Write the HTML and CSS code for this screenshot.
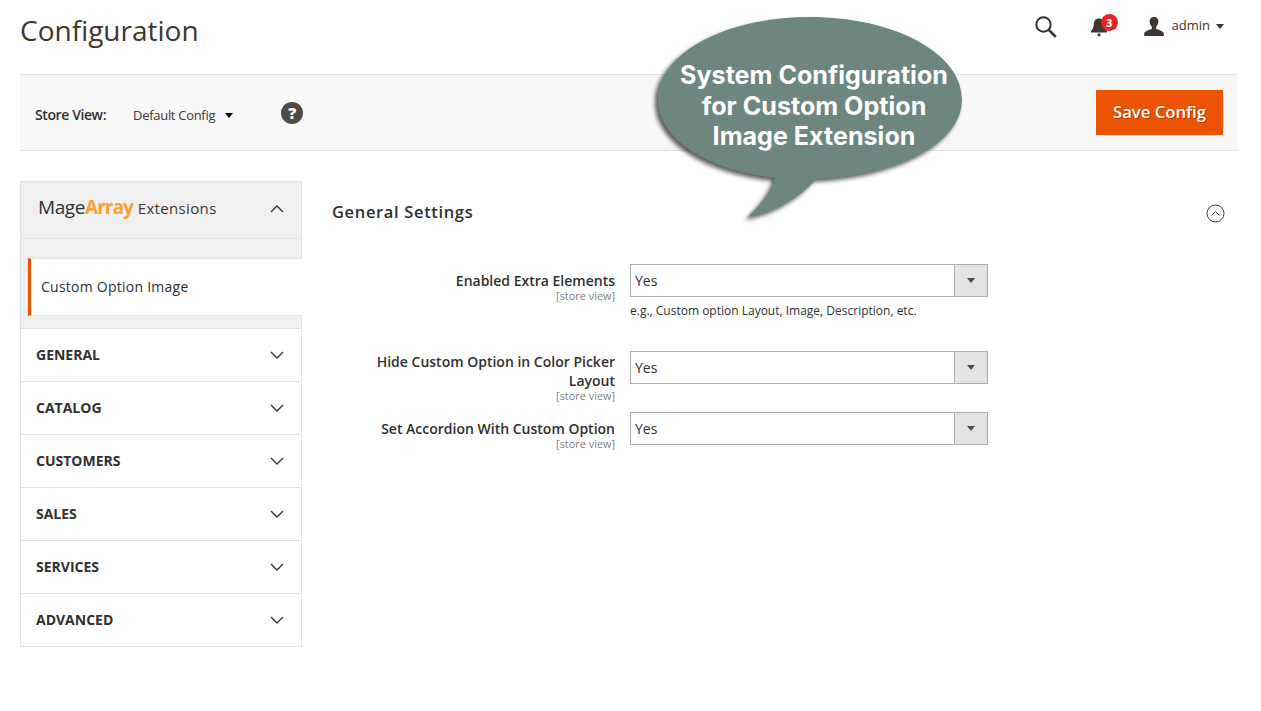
FILE: index.html
```html
<!DOCTYPE html>
<html lang="en">
<head>
<meta charset="utf-8">
<title>Configuration</title>
<link rel="stylesheet" href="styles.css">
</head>
<body>
<div class="page">
  <header class="header">
    <h1 class="title">Configuration</h1>
    <div class="actions">
      <svg class="icon-search" width="22" height="22" viewBox="0 0 22 22"><circle cx="8.500" cy="8.500" r="7.200" fill="none" stroke="#303030" stroke-width="2"/><path d="M13.800 13.800l7 7" stroke="#303030" stroke-width="2.600" fill="none"/></svg>
      <div class="bell">
        <svg width="18" height="20" viewBox="0 0 18 20"><path d="M9 1.500c-3.400 0-5.200 2.600-5.200 5.600 0 3.600-1.200 5.400-2.800 6.900v1.500h16v-1.500c-1.600-1.500-2.800-3.300-2.800-6.900 0-3-1.800-5.600-5.200-5.600z" fill="#41362f"/><circle cx="9" cy="17.800" r="1.600" fill="#41362f"/></svg>
        <span class="badge">3</span>
      </div>
      <div class="user">
        <svg width="20" height="19" viewBox="0 0 20 19"><path d="M10 0c-3 0-4.600 2.200-4.300 5.100.2 2 1 3.700 2.200 4.800v1.800c-2 1-7.200 2.300-7.700 4.500v2.800h19.600v-2.800c-.5-2.200-5.700-3.500-7.700-4.500V9.900c1.200-1.100 2-2.800 2.200-4.800C14.600 2.200 13 0 10 0z" fill="#41362f"/></svg>
        <span class="user-name">admin</span>
        <span class="caret caret-user"></span>
      </div>
    </div>
  </header>

  <div class="toolbar">
    <div class="scope">
      <span class="scope-label">Store View:</span>
      <span class="scope-value">Default Config</span>
      <span class="caret caret-scope"></span>
      <span class="help">?</span>
    </div>
    <button class="save" type="button">Save Config</button>
  </div>

  <div class="columns">
    <aside class="sidebar">
      <div class="tab-head">
        <span class="brand"><span class="brand-mage">Mage</span><span class="brand-array">Array</span><span class="brand-ext">Extensions</span></span>
        <svg class="chev" width="14" height="8" viewBox="0 0 14 8"><path d="M1 7l6-6 6 6" fill="none" stroke="#303030" stroke-width="1.300"/></svg>
      </div>
      <div class="tab-body">
        <div class="tab-item">Custom Option Image</div>
      </div>
      <div class="nav-list">
        <div class="nav-row"><span class="nav-text">GENERAL</span><svg class="chev" width="14" height="8" viewBox="0 0 14 8"><path d="M1 1l6 6 6-6" fill="none" stroke="#303030" stroke-width="1.300"/></svg></div>
        <div class="nav-row"><span class="nav-text">CATALOG</span><svg class="chev" width="14" height="8" viewBox="0 0 14 8"><path d="M1 1l6 6 6-6" fill="none" stroke="#303030" stroke-width="1.300"/></svg></div>
        <div class="nav-row"><span class="nav-text">CUSTOMERS</span><svg class="chev" width="14" height="8" viewBox="0 0 14 8"><path d="M1 1l6 6 6-6" fill="none" stroke="#303030" stroke-width="1.300"/></svg></div>
        <div class="nav-row"><span class="nav-text">SALES</span><svg class="chev" width="14" height="8" viewBox="0 0 14 8"><path d="M1 1l6 6 6-6" fill="none" stroke="#303030" stroke-width="1.300"/></svg></div>
        <div class="nav-row"><span class="nav-text">SERVICES</span><svg class="chev" width="14" height="8" viewBox="0 0 14 8"><path d="M1 1l6 6 6-6" fill="none" stroke="#303030" stroke-width="1.300"/></svg></div>
        <div class="nav-row"><span class="nav-text">ADVANCED</span><svg class="chev" width="14" height="8" viewBox="0 0 14 8"><path d="M1 1l6 6 6-6" fill="none" stroke="#303030" stroke-width="1.300"/></svg></div>
      </div>
    </aside>

    <main class="main">
      <div class="section-head">
        <h2 class="section-title">General Settings</h2>
        <svg class="collapse" width="19" height="19" viewBox="0 0 19 19"><circle cx="9.500" cy="9.500" r="8.500" fill="none" stroke="#41362f" stroke-width="1"/><path d="M5.500 11.500l4-4 4 4" fill="none" stroke="#41362f" stroke-width="1"/></svg>
      </div>
      <div class="form">
        <div class="field field-first">
          <div class="field-label">Enabled Extra Elements<small class="scope-note">[store view]</small></div>
          <div class="field-control">
            <div class="select"><span class="select-value">Yes</span><span class="select-arrow"><span class="caret caret-select"></span></span></div>
            <p class="hint">e.g., Custom option Layout, Image, Description, etc.</p>
          </div>
        </div>
        <div class="field field-second">
          <div class="field-label field-label-wrap">Hide Custom Option in Color Picker Layout<small class="scope-note">[store view]</small></div>
          <div class="field-control">
            <div class="select"><span class="select-value">Yes</span><span class="select-arrow"><span class="caret caret-select"></span></span></div>
          </div>
        </div>
        <div class="field">
          <div class="field-label">Set Accordion With Custom Option<small class="scope-note">[store view]</small></div>
          <div class="field-control">
            <div class="select"><span class="select-value">Yes</span><span class="select-arrow"><span class="caret caret-select"></span></span></div>
          </div>
        </div>
      </div>
    </main>
  </div>

  <div class="bubble">
    <svg class="bubble-shape" width="340" height="240" viewBox="0 0 340 240"><path d="M170 12C254 12 322 48 322 94.500C322 139 258 170 176 174C158 195 132 208 108 212C120 200 132 186 135 173C65 165 18 133 18 94.500C18 48 86 12 170 12Z" fill="#6d8780"/></svg>
    <p class="bubble-text">System Configuration<br>for Custom Option<br>Image Extension</p>
  </div>
</div>
</body>
</html>
```
FILE: styles.css
```css
* { box-sizing: border-box; }
html, body { margin: 0; padding: 0; background: #fff; }
body { font-family: "Open Sans", "Liberation Sans", sans-serif; color: #303030; font-size: 14px; }
.page { position: relative; width: 1261px; height: 711px; overflow: hidden; padding: 0 23px 0 20px; }

.header { height: 74px; display: flex; justify-content: space-between; align-items: flex-start; }
.title { margin: 10px 0 0; font-size: 28px; line-height: 40px; font-weight: 400; color: #41362f; }
.actions { display: flex; align-items: center; margin: 16px 14px 0 0; }
.icon-search { display: block; margin-right: 33px; }
.bell { position: relative; width: 18px; height: 20px; margin-right: 36px; }
.bell svg { display: block; }
.badge { position: absolute; left: 11px; top: -3px; width: 17px; height: 17px; border-radius: 50%; background: #e22626; color: #fff; font-size: 11px; font-weight: 700; line-height: 17px; text-align: center; }
.user { display: flex; align-items: center; }
.user svg { display: block; margin-right: 8px; margin-top: -1px; }
.user-name { font-size: 13px; color: #41362f; line-height: 20px; margin-top: -5px; }
.caret { display: block; width: 0; height: 0; border-left: 4.500px solid transparent; border-right: 4.500px solid transparent; border-top: 5px solid #41362f; }
.caret-user { margin-left: 6px; margin-top: -2px; }

.toolbar { height: 77px; background: #f8f8f8; border-top: 1px solid #e3e3e3; border-bottom: 1px solid #e3e3e3; display: flex; align-items: center; justify-content: space-between; padding: 0 15px; width: 1218px; }
.scope { display: flex; align-items: center; }
.scope-label { font-size: 14px; font-weight: 600; color: #303030; letter-spacing: -0.4px; margin-top: 4px; }
.scope-value { font-size: 13px; color: #41362f; margin: 4px 0 0 27px; letter-spacing: -0.3px; }
.caret-scope { margin: 6px 0 0 10px; border-top-color: #000; }
.help { width: 22px; height: 22px; margin-left: 48px; border-radius: 50%; background: #514943; color: #fff; font-size: 16px; font-weight: 800; line-height: 22px; text-align: center; }
.save { width: 127px; height: 45px; border: 0; background: #eb5202; color: #fff; font-family: inherit; font-size: 16.700px; font-weight: 600; padding: 0 0 2px; text-shadow: 1px 1px 0 rgba(0,0,0,.25); }

.columns { display: flex; margin-top: 30px; width: 1218px; }
.sidebar { width: 282px; flex: none; }
.tab-head { height: 58px; background: #f0f0f0; border: 1px solid #e3e3e3; display: flex; align-items: center; justify-content: space-between; padding: 0 17px 2px 17px; }
.chev { display: block; flex: none; }
.brand { font-size: 19px; line-height: 24px; display: flex; align-items: baseline; margin-top: -4px; }
.brand-mage { color: #303030; letter-spacing: -0.4px; }
.brand-array { color: #f8a133; font-weight: 700; letter-spacing: -1px; }
.brand-ext { font-size: 15px; color: #41362f; margin-left: 5px; letter-spacing: .35px; }
.tab-body { background: #f0f0f0; border-right: 1px solid #e3e3e3; border-left: 1px solid #e3e3e3; padding: 19px 0 12px 7px; }
.tab-item { height: 58px; margin-right: -1px; background: #fff; border-left: 3px solid #eb5202; border-top: 1px solid #e3e3e3; border-bottom: 1px solid #e3e3e3; padding-left: 10px; line-height: 56px; font-size: 14px; color: #303030; letter-spacing: .25px; }
.nav-list { border: 1px solid #e3e3e3; border-bottom: 0; }
.nav-row { height: 53px; display: flex; align-items: center; justify-content: space-between; padding: 0 17px 0 15px; border-bottom: 1px solid #e3e3e3; font-size: 14px; font-weight: 700; color: #303030; }
.nav-text { margin-bottom: 2px; }

.main { flex: 1; padding: 0 13px 0 30px; }
.section-head { height: 63px; display: flex; align-items: center; justify-content: space-between; }
.section-title { margin: 0 0 2px; font-size: 16.500px; font-weight: 600; color: #303030; letter-spacing: .65px; }
.collapse { display: block; margin-top: 1px; }
.form { padding-top: 20px; }
.field { display: flex; align-items: flex-start; }
.field-second { margin-top: 31px; }
.field-first { height: 56px; }
.field-second { height: 61px; }
.field-label { width: 283px; flex: none; text-align: right; font-size: 14px; font-weight: 600; line-height: 19px; color: #303030; padding-top: 7px; }
.field-label-wrap { padding-top: 1px; }
.scope-note { display: block; font-size: 10.900px; font-weight: 400; line-height: 11px; color: #808080; }
.field-control { margin-left: 15px; width: 358px; }
.select { height: 33px; border: 1px solid #adadad; display: flex; align-items: stretch; background: #fff; }
.select-value { flex: 1; padding-left: 4px; font-size: 14px; line-height: 31px; color: #303030; }
.select-arrow { width: 33px; background: #e3e3e3; border-left: 1px solid #adadad; display: flex; align-items: center; justify-content: center; }
.caret-select { border-top-color: #514943; border-left-width: 4px; border-right-width: 4px; border-top-width: 5px; }
.hint { margin: 5px 0 0; font-size: 12px; line-height: 18px; color: #303030; }

.bubble { position: absolute; left: 640px; top: 5px; width: 340px; height: 240px; }
.bubble-shape { display: block; filter: drop-shadow(-3px 3px 2px rgba(40,40,40,.75)); }
.bubble-text { position: absolute; left: 0; top: 55px; width: 348px; margin: 0; text-align: center; color: #fff; font-family: Inter, "Liberation Sans", sans-serif; font-size: 25.100px; font-weight: 700; line-height: 30.500px; }
```
